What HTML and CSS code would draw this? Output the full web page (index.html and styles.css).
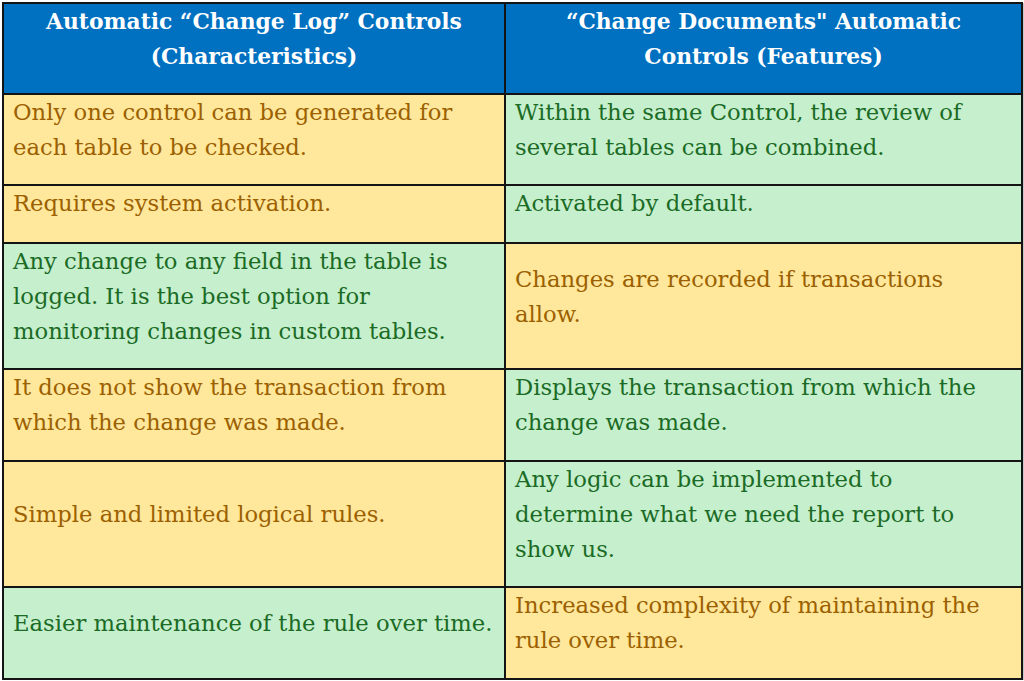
FILE: index.html
```html
<!DOCTYPE html>
<html lang="en">
<head>
<meta charset="utf-8">
<title>Change Log vs Change Documents</title>
<link rel="stylesheet" href="styles.css">
</head>
<body>
<table class="cmp">
  <colgroup><col class="c1"><col class="c2"></colgroup>
  <thead>
    <tr>
      <th>Automatic “Change Log” Controls (Characteristics)</th>
      <th>“Change Documents" Automatic Controls (Features)</th>
    </tr>
  </thead>
  <tbody>
    <tr>
      <td class="neutral">Only one control can be generated for each table to be checked.</td>
      <td class="good">Within the same Control, the review of several tables can be combined.</td>
    </tr>
    <tr class="single">
      <td class="neutral">Requires system activation.</td>
      <td class="good">Activated by default.</td>
    </tr>
    <tr>
      <td class="good">Any change to any field in the table is logged. It is the best option for monitoring changes in custom tables.</td>
      <td class="neutral">Changes are recorded if transactions allow.</td>
    </tr>
    <tr class="tall">
      <td class="neutral">It does not show the transaction from which the change was made.</td>
      <td class="good">Displays the transaction from which the change was made.</td>
    </tr>
    <tr>
      <td class="neutral">Simple and limited logical rules.</td>
      <td class="good">Any logic can be implemented to determine what we need the report to show us.</td>
    </tr>
    <tr class="tall">
      <td class="good">Easier maintenance of the rule over time.</td>
      <td class="neutral">Increased complexity of maintaining the rule over time.</td>
    </tr>
  </tbody>
</table>
</body>
</html>
```
FILE: styles.css
```css
html, body {
  margin: 0;
  padding: 0;
  background: #ffffff;
}
body {
  padding: 2px 0 0 2px;
  font-family: "DejaVu Serif", "Liberation Serif", serif;
}
.cmp {
  border-collapse: collapse;
  table-layout: fixed;
  width: 1019px;
  box-shadow: 1px 1px 0 #c8c8c8;
}
.c1 { width: 502px; }
.c2 { width: 517px; }
.cmp th,
.cmp td {
  border: 2px solid #141414;
  font-size: 22.7px;
  line-height: 35px;
  vertical-align: middle;
  padding: 0 5px 19px 9px;
  text-align: left;
}
.cmp td + td {
  padding-right: 22px;
}
.cmp .single td {
  padding-bottom: 21px;
}
.cmp .tall td {
  padding-bottom: 20px;
}
.cmp th {
  background: #0070c0;
  color: #ffffff;
  font-weight: bold;
  font-size: 21.8px;
  text-align: center;
  padding: 0 20px 19px;
}
.neutral {
  background: #ffe89c;
  color: #9c6000;
}
.good {
  background: #c6efce;
  color: #1b6b25;
}
```
